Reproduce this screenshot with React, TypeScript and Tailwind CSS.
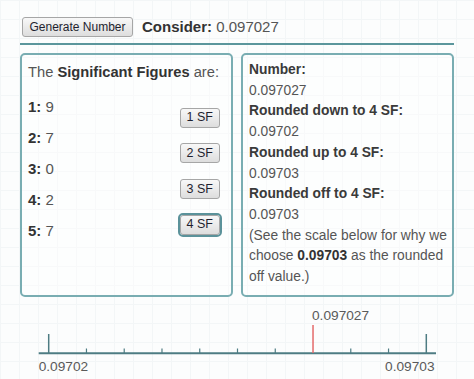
const btn =
  'h-[20px] px-[6px] rounded-[3px] border border-[#a6a6a6] bg-[linear-gradient(#f8f8f8,#dddddd)] text-[12.5px] leading-none text-[#1f1f2f] whitespace-nowrap'

const digits = ['9', '7', '0', '2', '7']

const Scale = () => {
  const start = 48.7
  const step = 37.76
  const minor = [1, 2, 3, 4, 5, 6, 8, 9]
  return (
    <svg width="474" height="82" className="block" style={{ fontFamily: '"Liberation Sans", Arial, sans-serif' }}>
      <line x1="38.7" y1="56.3" x2="436" y2="56.3" stroke="#4e7c83" strokeWidth="2" />
      <line x1={start} y1="37" x2={start} y2="56" stroke="#4e7c83" strokeWidth="1.5" />
      <line x1={start + step * 10} y1="37" x2={start + step * 10} y2="56" stroke="#4e7c83" strokeWidth="1.5" />
      {minor.map((k) => (
        <line key={k} x1={start + step * k} y1="51.5" x2={start + step * k} y2="56" stroke="#4e7c83" strokeWidth="1.2" />
      ))}
      <line x1={start + step * 7} y1="28" x2={start + step * 7} y2="56" stroke="#e46a6a" strokeWidth="1.5" />
      <text x="312" y="22.8" fontSize="13.7" fill="#5a5a5a">0.097027</text>
      <text x="38.7" y="73.8" fontSize="13.7" fill="#5a5a5a">0.09702</text>
      <text x="434.5" y="73.8" fontSize="13.7" fill="#5a5a5a" textAnchor="end">0.09703</text>
    </svg>
  )
}

const App = () => {
  return (
    <div className="w-[474px] h-[379px] overflow-hidden bg-[#fcfdfd] bg-[linear-gradient(#f3f6f7_1px,transparent_1px),linear-gradient(90deg,#f3f6f7_1px,transparent_1px)] bg-[size:19px_19px] font-['Liberation_Sans',Arial,sans-serif] text-[#555]">
      <div className="ml-[20px] w-[434px] pt-[17px]">
        <div className="flex items-center gap-[9px] ml-[2px]">
          <button className={btn + ' w-[111px] px-[4px] text-[12px]'}>Generate Number</button>
          <div className="text-[15px] leading-[20px]">
            <b className="text-[#333]">Consider:</b> 0.097027
          </div>
        </div>
        <div className="mt-[6px] h-[2px] bg-[#5b969c]" />
        <div className="mt-[8px] flex gap-[8px]">
          <div className="w-[213px] h-[244px] rounded-[5px] border-2 border-[#79adb2] bg-white/40 pl-[6px] pt-[7px]">
            <div className="text-[14.7px] leading-[20px]">
              The <b className="text-[#333]">Significant Figures</b> are:
            </div>
            <div className="mt-[9px] flex">
              <div className="text-[15px] leading-[31px]">
                {digits.map((d, i) => (
                  <div key={i}>
                    <b className="text-[#333]">{i + 1}:</b> {d}
                  </div>
                ))}
              </div>
              <div className="ml-auto mr-[11px] pt-[16.5px] flex flex-col gap-[15.7px]">
                <button className={btn}>1 SF</button>
                <button className={btn}>2 SF</button>
                <button className={btn}>3 SF</button>
                <button className={btn + ' outline-2 outline-[#5b929a]'}>4 SF</button>
              </div>
            </div>
          </div>
          <div className="w-[213px] h-[244px] rounded-[5px] border-2 border-[#79adb2] bg-white/40 pl-[6px] pt-[5px] text-[13.8px] leading-[20.7px]">
            <div className="font-bold text-[#3a3a3a]">Number:</div>
            <div>0.097027</div>
            <div className="font-bold text-[#3a3a3a]">Rounded down to 4 SF:</div>
            <div>0.09702</div>
            <div className="font-bold text-[#3a3a3a]">Rounded up to 4 SF:</div>
            <div>0.09703</div>
            <div className="font-bold text-[#3a3a3a]">Rounded off to 4 SF:</div>
            <div>0.09703</div>
            <p>
              (See the scale below for why we choose <b className="text-[#333]">0.09703</b> as the rounded off value.)
            </p>
          </div>
        </div>
      </div>
      <Scale />
    </div>
  )
}

export default App
